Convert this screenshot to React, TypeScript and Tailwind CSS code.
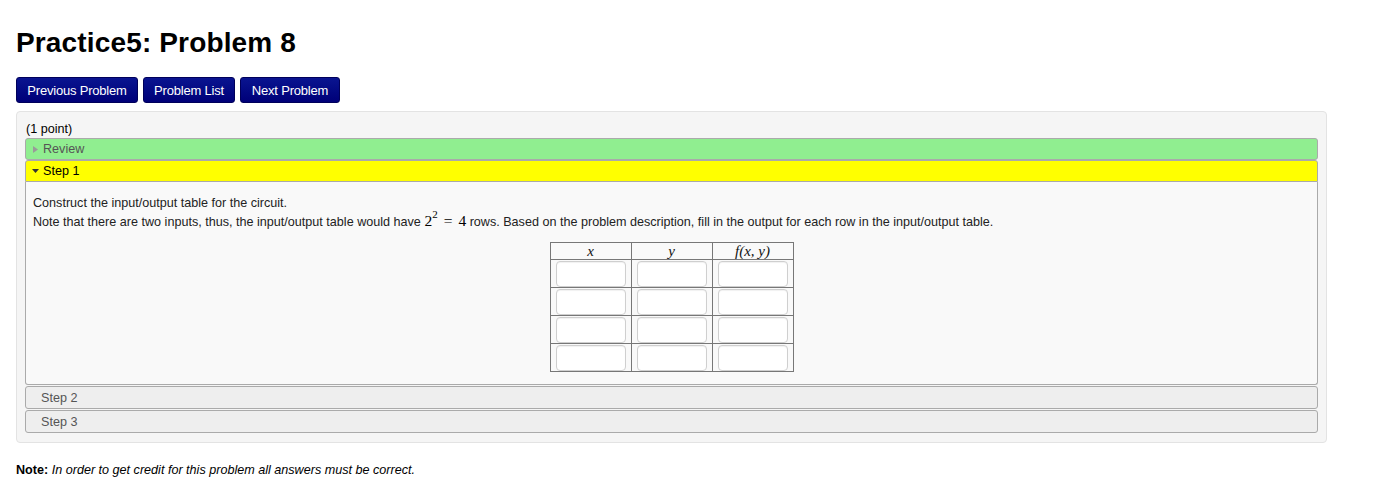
import React from "react";

const sans = { fontFamily: '"Liberation Sans", Arial, sans-serif' };
const serif = { fontFamily: '"Liberation Serif", "Times New Roman", serif' };

function TriRight() {
  return (
    <svg width="5" height="7" viewBox="0 0 5 7" className="mr-[5px]">
      <polygon points="0,0 5,3.5 0,7" fill="#9a9a9a" />
    </svg>
  );
}

function TriDown() {
  return (
    <svg width="7" height="5" viewBox="0 0 7 5" className="mr-[4px]">
      <polygon points="0,0 7,0 3.5,4" fill="#333" />
    </svg>
  );
}

function Cell() {
  return (
    <td className="border border-[#777] px-[5px] pt-px pb-0">
      <input
        type="text"
        className="block w-[70px] h-[26px] rounded-[4px] border border-[#cfcfcf] bg-white outline-none shadow-[inset_0_1px_1px_rgba(0,0,0,0.06)]"
      />
    </td>
  );
}

export default function App() {
  const rows = [0, 1, 2, 3];
  return (
    <div className="bg-white min-h-[490px] text-black" style={sans}>
      <div className="pl-[16px] pr-[54px] pt-[27px]">
        <h1 className="text-[28px] leading-[32px] font-bold m-0 tracking-[0.15px]">Practice5: Problem 8</h1>

        <div className="flex gap-[5px] mt-[18px]">
          {[
            ["Previous Problem", "w-[122px]"],
            ["Problem List", "w-[92px]"],
            ["Next Problem", "w-[100px]"],
          ].map(([t, w]) => (
            <button
              key={t}
              className={`${w} h-[26px] rounded-[3px] border border-[#00005a] bg-gradient-to-b from-[#0a1490] to-[#000078] text-white text-[13px] tracking-[-0.2px] flex items-center justify-center pt-px`}
            >
              {t}
            </button>
          ))}
        </div>

        <div className="mt-[8px] border border-[#e3e3e3] bg-[#f5f5f5] rounded-[4px] px-[8px] pt-[8px] pb-[9px]">
          <div className="text-[12.6px] leading-[18px] pl-px">(1 point)</div>

          <div className="h-[22px] bg-[#90ee90] border border-[#aaa] rounded-[3px] flex items-center pl-[7px] pt-px text-[#555]">
            <TriRight />
            <span className="text-[12.6px]">Review</span>
          </div>

          <div className="h-[22px] bg-[#ffff00] border border-[#aaa] rounded-t-[3px] flex items-center pl-[6px] pt-px text-black">
            <TriDown />
            <span className="text-[12.6px]">Step 1</span>
          </div>

          <div className="bg-[#f9f9f9] border border-t-0 border-[#aaa] rounded-b-[3px] px-[7px] pt-[12px] pb-[12px] text-[12.6px] leading-[19px] text-[#222]">
            <div>Construct the input/output table for the circuit.</div>
            <div className="h-[19px]">
              Note that there are two inputs, thus, the input/output table would have{" "}
              <span style={serif} className="text-[15.5px] leading-none text-black">
                2<sup className="text-[11px] leading-none -top-[0.75em]">2</sup>
                <span className="mx-[6px]">=</span>4
              </span>{" "}
              rows. Based on the problem description, fill in the output for each row in the input/output table.
            </div>

            <div className="flex justify-center mt-[10px]">
              <table className="border-collapse border border-[#222]">
                <thead>
                  <tr className="h-[17px]">
                    {["x", "y", "f(x, y)"].map((h) => (
                      <th
                        key={h}
                        className="border border-[#777] w-[81px] p-0 text-[15px] leading-[16px] font-normal italic text-[#111]"
                        style={serif}
                      >
                        {h}
                      </th>
                    ))}
                  </tr>
                </thead>
                <tbody>
                  {rows.map((r) => (
                    <tr key={r}>
                      <Cell />
                      <Cell />
                      <Cell />
                    </tr>
                  ))}
                </tbody>
              </table>
            </div>
          </div>

          <div className="mt-px h-[23px] bg-[#eee] border border-[#aaa] rounded-[3px] flex items-center pl-[15px] pt-px text-[12.6px] text-[#555]">
            Step 2
          </div>
          <div className="mt-px h-[23px] bg-[#eee] border border-[#aaa] rounded-[3px] flex items-center pl-[15px] pt-px text-[12.6px] text-[#555]">
            Step 3
          </div>
        </div>

        <div className="mt-[18px] text-[12.6px] leading-[18px]">
          <b>Note:</b> <i>In order to get credit for this problem all answers must be correct.</i>
        </div>
      </div>
    </div>
  );
}
